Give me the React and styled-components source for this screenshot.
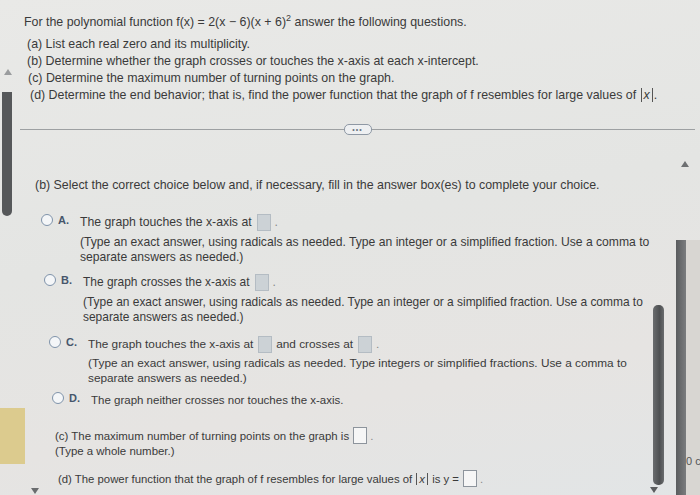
import React from 'react';
import styled, { createGlobalStyle } from 'styled-components';

const GlobalStyle = createGlobalStyle`
  html, body {
    margin: 0;
    padding: 0;
    background: #e6e6e4;
  }
`;

const Screen = styled.div`
  position: relative;
  width: 700px;
  height: 495px;
  overflow: hidden;
  background: linear-gradient(170deg, #e9e9e7 0%, #e4e5e3 45%, #e6e4e2 75%, #e2e5e6 100%);
  font-family: "Liberation Sans", Arial, sans-serif;
  font-size: 12.4px;
  color: #3a3a3a;
`;

const Content = styled.div`
  display: flex;
  flex-direction: column;
  padding-top: 14px;
`;

const Line = styled.div`
  line-height: ${p => p.lh || 17}px;
  padding-left: ${p => p.indent || 0}px;
  margin-top: ${p => p.mt || 0}px;
  font-size: ${p => p.size || 12.4}px;
  white-space: nowrap;
`;

const Sup = styled.sup`
  font-size: 9px;
  line-height: 0;
`;

const Abs = styled.span`
  font-style: italic;
  border-left: 1px solid #555;
  border-right: 1px solid #555;
  padding: 0 2px;
  margin: 0 1px;
`;

const DividerRow = styled.div`
  display: flex;
  align-items: center;
  margin: 20px 5px 0 20px;
`;

const Rule = styled.div`
  flex: 1;
  height: 1px;
  background: #9da0a2;
`;

const Pill = styled.div`
  width: 26px;
  height: 9px;
  border: 1px solid #8e98a4;
  border-radius: 5px;
  background: #eef0f2;
  display: flex;
  align-items: center;
  justify-content: center;
  font-size: 7px;
  line-height: 1;
  color: #6a7480;
  letter-spacing: 1px;
`;

const Choice = styled.div`
  display: grid;
  grid-template-columns: 13px 18px auto;
  column-gap: 4px;
  padding-left: ${p => p.indent}px;
  margin-top: ${p => p.mt}px;
  font-size: ${p => p.size}px;
`;

const Radio = styled.span`
  width: 12px;
  height: 12px;
  border: 1px solid #7f93aa;
  border-radius: 50%;
  background: #f4f6f8;
  box-sizing: border-box;
  margin-top: 1px;
`;

const Letter = styled.span`
  font-weight: bold;
  font-size: 11px;
  color: #46566b;
  line-height: 15px;
`;

const ChoiceBody = styled.div`
  display: flex;
  flex-direction: column;
`;

const MainText = styled.div`
  display: flex;
  align-items: center;
  height: 18px;
  white-space: nowrap;
  gap: 3px;
`;

const Hints = styled.div`
  margin-top: ${p => p.mt}px;
  font-size: ${p => p.size}px;
`;

const Hint = styled.div`
  line-height: 15px;
  white-space: nowrap;
`;

const Box = styled.span`
  display: inline-block;
  width: 14px;
  height: 17px;
  box-sizing: border-box;
  border: 1px solid ${p => (p.filled ? '#b4bcc3' : '#8d949c')};
  background: ${p => (p.filled ? '#ccd2d6' : '#f6f6f6')};
  vertical-align: middle;
  margin: 0 1px 0 2px;
`;

const InlineRow = styled.div`
  display: flex;
  align-items: center;
  height: 17px;
  white-space: nowrap;
  padding-left: ${p => p.indent}px;
  margin-top: ${p => p.mt || 0}px;
  font-size: ${p => p.size}px;
  gap: 2px;
`;

const Dot = styled.span`
  color: #888;
`;

/* photo artefacts: scrollbars and bezel lying over the page */
const LeftBar = styled.div`
  position: absolute;
  left: 2px;
  top: 92px;
  width: 10px;
  height: 124px;
  border-radius: 0 0 5px 5px;
  background: #56585a;
`;

const Triangle = styled.div`
  position: absolute;
  left: ${p => p.x}px;
  top: ${p => p.y}px;
  width: 0;
  height: 0;
  border-left: 4px solid transparent;
  border-right: 4px solid transparent;
  ${p => (p.down ? `border-top: 6px solid ${p.color};` : `border-bottom: 6px solid ${p.color};`)}
`;

const YellowTab = styled.div`
  position: absolute;
  left: 0;
  top: 408px;
  width: 25px;
  height: 56px;
  background: #dccb8e;
`;

const RightBar = styled.div`
  position: absolute;
  left: 653px;
  top: 305px;
  width: 11px;
  height: 180px;
  border-radius: 5px;
  background: linear-gradient(90deg, #6a6c6e, #4e5052 60%, #6a6c6e);
`;

const Bezel = styled.div`
  position: absolute;
  left: 676px;
  top: 240px;
  width: 10px;
  height: 260px;
  background: linear-gradient(90deg, #5a5c5e, #7a7c7e);
`;

const Beyond = styled.div`
  position: absolute;
  left: 686px;
  top: 240px;
  width: 14px;
  height: 260px;
  background: #d8d6d2;
`;

const EdgeText = styled.span`
  position: absolute;
  left: 686px;
  top: 455px;
  font-size: 11px;
  color: #555;
  white-space: nowrap;
`;

const choices = [
  {
    key: 'A',
    indent: 41,
    mt: 19,
    size: 12.25,
    hintSize: 12.15,
    hintGap: 4,
    parts: ['The graph touches the x-axis at'],
    hint: [
      '(Type an exact answer, using radicals as needed. Type an integer or a simplified fraction. Use a comma to',
      'separate answers as needed.)',
    ],
  },
  {
    key: 'B',
    indent: 44,
    mt: 8,
    size: 11.95,
    hintSize: 11.95,
    hintGap: 4,
    parts: ['The graph crosses the x-axis at'],
    hint: [
      '(Type an exact answer, using radicals as needed. Type an integer or a simplified fraction. Use a comma to',
      'separate answers as needed.)',
    ],
  },
  {
    key: 'C',
    indent: 49,
    mt: 10,
    size: 11.8,
    hintSize: 11.8,
    hintGap: 3,
    parts: ['The graph touches the x-axis at', 'and crosses at'],
    hint: [
      '(Type an exact answer, using radicals as needed. Type integers or simplified fractions. Use a comma to',
      'separate answers as needed.)',
    ],
  },
  {
    key: 'D',
    indent: 52,
    mt: 5,
    size: 11.5,
    parts: ['The graph neither crosses nor touches the x-axis.'],
    noBox: true,
  },
];

export default function App() {
  return (
    <>
      <GlobalStyle />
      <Screen>
        <Content>
          <Line indent={24} mt={0}>
            For the polynomial function f(x) = 2(x − 6)(x + 6)<Sup>2</Sup> answer the following questions.
          </Line>
          <Line indent={27} mt={5}>(a) List each real zero and its multiplicity.</Line>
          <Line indent={27}>(b) Determine whether the graph crosses or touches the x-axis at each x-intercept.</Line>
          <Line indent={28}>(c) Determine the maximum number of turning points on the graph.</Line>
          <Line indent={30}>
            (d) Determine the end behavior; that is, find the power function that the graph of f resembles for large values of <Abs>x</Abs>.
          </Line>

          <DividerRow>
            <Rule />
            <Pill>•••</Pill>
            <Rule />
          </DividerRow>

          <Line indent={35} mt={42}>
            (b) Select the correct choice below and, if necessary, fill in the answer box(es) to complete your choice.
          </Line>

          {choices.map(c => (
            <Choice key={c.key} indent={c.indent} mt={c.mt} size={c.size}>
              <Radio />
              <Letter>{c.key}.</Letter>
              <ChoiceBody>
                <MainText>
                  {c.parts.map((p, i) => (
                    <React.Fragment key={i}>
                      <span>{p}</span>
                      {!c.noBox && <Box filled />}
                      {!c.noBox && i === c.parts.length - 1 && <Dot>.</Dot>}
                    </React.Fragment>
                  ))}
                </MainText>
                {c.hint && (
                  <Hints mt={c.hintGap} size={c.hintSize}>
                    {c.hint.map(h => <Hint key={h}>{h}</Hint>)}
                  </Hints>
                )}
              </ChoiceBody>
            </Choice>
          ))}

          <InlineRow indent={55} mt={18} size={11.45}>
            <span>(c) The maximum number of turning points on the graph is</span>
            <Box />
            <Dot>.</Dot>
          </InlineRow>
          <Line indent={55} lh={15} size={11.45}>(Type a whole number.)</Line>
          <InlineRow indent={58} mt={11} size={11.35}>
            <span>(d) The power function that the graph of f resembles for large values of <Abs>x</Abs> is y =</span>
            <Box />
            <Dot>.</Dot>
          </InlineRow>
        </Content>

        <Triangle x={4} y={69} color="#9a9c9e" />
        <LeftBar />
        <YellowTab />
        <Triangle x={31} y={488} color="#6a6c6e" down />
        <Triangle x={681} y={161} color="#6e7072" />
        <RightBar />
        <Triangle x={650} y={487} color="#5a5c5e" down />
        <Bezel />
        <Beyond />
        <EdgeText>0 c</EdgeText>
      </Screen>
    </>
  );
}
